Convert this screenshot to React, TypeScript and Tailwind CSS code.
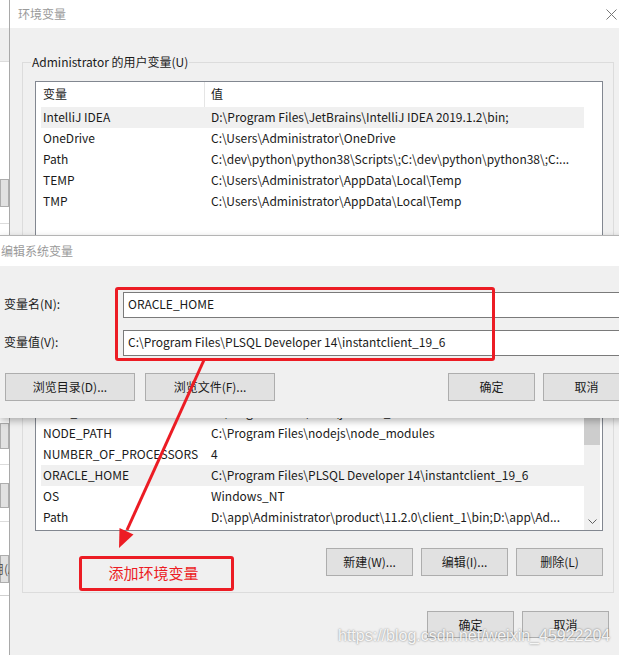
import clsx from "clsx";

type Item = { name: string; value: string; selected?: boolean };

const userVars: Item[] = [
  { name: "IntelliJ IDEA", value: "D:\\Program Files\\JetBrains\\IntelliJ IDEA 2019.1.2\\bin;", selected: true },
  { name: "OneDrive", value: "C:\\Users\\Administrator\\OneDrive" },
  { name: "Path", value: "C:\\dev\\python\\python38\\Scripts\\;C:\\dev\\python\\python38\\;C:..." },
  { name: "TEMP", value: "C:\\Users\\Administrator\\AppData\\Local\\Temp" },
  { name: "TMP", value: "C:\\Users\\Administrator\\AppData\\Local\\Temp" },
];

const systemVars: Item[] = [
  { name: "ComSpec", value: "C:\\Windows\\system32\\cmd.exe" },
  { name: "DriverData", value: "C:\\Windows\\System32\\Drivers\\DriverData" },
  { name: "JAVA_HOME", value: "C:\\Program Files\\Java\\jdk1.8.0_201" },
  { name: "NODE_PATH", value: "C:\\Program Files\\nodejs\\node_modules" },
  { name: "NUMBER_OF_PROCESSORS", value: "4" },
  { name: "ORACLE_HOME", value: "C:\\Program Files\\PLSQL Developer 14\\instantclient_19_6", selected: true },
  { name: "OS", value: "Windows_NT" },
  { name: "Path", value: "D:\\app\\Administrator\\product\\11.2.0\\client_1\\bin;D:\\app\\Ad..." },
];

function Row({ item }: { item: Item }) {
  return (
    <div className={clsx("flex h-[21px] shrink-0 items-center pb-[2px]", item.selected && "bg-[#f0f0f0]")}>
      <div className="w-[164px] pl-[2px] whitespace-nowrap overflow-hidden">{item.name}</div>
      <div className="flex-1 pl-[6px] whitespace-nowrap overflow-hidden">{item.value}</div>
    </div>
  );
}

function Btn({ label, className }: { label: string; className?: string }) {
  return (
    <div className={clsx("h-full shrink-0 bg-[#e1e1e1] border border-[#adadad] flex items-center justify-center", className)}>
      {label}
    </div>
  );
}

function LeftStrip() {
  return (
    <div className="w-[9px] shrink-0 h-full bg-white flex flex-col overflow-hidden">
      <div className="h-[28px] shrink-0 bg-white" />
      <div className="h-[34px] shrink-0 bg-[#efefef] border-b border-[#dcdcdc]" />
      <div className="h-[117px] shrink-0" />
      <div className="h-[28px] shrink-0 bg-[#e1e1e1] border border-[#adadad]" />
      <div className="h-[16px] shrink-0" />
      <div className="h-px shrink-0 bg-[#dcdcdc]" />
      <div className="h-[199px] shrink-0" />
      <div className="h-[26px] shrink-0 bg-[#e1e1e1] border border-[#adadad]" />
      <div className="h-[15px] shrink-0" />
      <div className="h-px shrink-0 bg-[#dcdcdc]" />
      <div className="h-[18px] shrink-0" />
      <div className="h-[25px] shrink-0 bg-[#e1e1e1] border border-[#adadad]" />
      <div className="h-[13px] shrink-0" />
      <div className="h-px shrink-0 bg-[#dcdcdc]" />
      <div className="h-[33px] shrink-0" />
      <div className="h-[28px] shrink-0 bg-[#e1e1e1] border border-[#adadad] flex items-center text-[#555] whitespace-nowrap">
        <span className="-ml-[21px]">应用(A)</span>
      </div>
      <div className="h-[12px] shrink-0" />
      <div className="h-px shrink-0 bg-[#d0d0d0]" />
    </div>
  );
}

function MainDialog() {
  return (
    <div className="w-[625px] shrink-0 h-full border-l border-[#a9a9a9] flex flex-col">
      <div className="h-[28px] shrink-0 bg-white flex items-center pl-[8px] text-[#9a9a9a]">
        <span>环境变量</span>
        <div className="ml-auto w-[46px] h-full flex items-center justify-center">
          <svg width="11" height="11" viewBox="0 0 11 11">
            <path d="M0.5 0.5L10.5 10.5M10.5 0.5L0.5 10.5" stroke="#777" strokeWidth="1" />
          </svg>
        </div>
      </div>

      <div className="flex-1 bg-[#f0f0f0] pt-[34px] pl-[12px]">
        {/* user variables */}
        <div className="w-[592px] border border-[#dcdcdc] pl-[12px] pr-[10px] pb-[6px]">
          <div className="-mt-[9px] -ml-[4px] px-[1px] w-fit leading-[16px] bg-[#f0f0f0]">Administrator 的用户变量(U)</div>
          <div className="mt-[11px] h-[172px] w-[568px] border border-[#828790] bg-white">
            <div className="ml-[5px] w-[543px]">
              <div className="flex h-[25px] items-center">
                <div className="w-[164px] h-full pl-[2px] pb-[2px] flex items-center border-r border-[#e5e5e5]">变量</div>
                <div className="flex-1 pl-[6px] pb-[2px]">值</div>
              </div>
              {userVars.map((v) => (
                <Row key={v.name} item={v} />
              ))}
            </div>
          </div>
          <div className="mt-[14px] h-[27px] flex justify-end gap-[8px]">
            <Btn label="新建(N)..." className="w-[87px]" />
            <Btn label="编辑(E)..." className="w-[87px]" />
            <Btn label="删除(D)" className="w-[87px]" />
          </div>
        </div>

        {/* system variables */}
        <div className="mt-[15px] w-[592px] border border-[#dcdcdc] pl-[12px] pr-[10px] pb-[16px]">
          <div className="-mt-[9px] -ml-[4px] px-[1px] w-fit leading-[16px] bg-[#f0f0f0]">系统变量(S)</div>
          <div className="mt-[10px] h-[197px] w-[568px] border border-[#828790] bg-white flex overflow-hidden">
            <div className="ml-[5px] w-[543px] flex flex-col justify-end pb-[2px] overflow-hidden">
              {systemVars.map((v) => (
                <Row key={v.name} item={v} />
              ))}
            </div>
            <div className="w-[16px] bg-[#f0f0f0] flex flex-col justify-end">
              <div className="h-[28px] bg-[#cdcdcd]" />
              <div className="h-[68px]" />
              <div className="h-[17px] flex items-center justify-center">
                <svg width="9" height="5" viewBox="0 0 9 5">
                  <path d="M0.5 0.5L4.5 4.5L8.5 0.5" stroke="#606060" strokeWidth="1" fill="none" />
                </svg>
              </div>
            </div>
          </div>
          <div className="mt-[17px] h-[28px] flex justify-end gap-[8px]">
            <Btn label="新建(W)..." className="w-[87px]" />
            <Btn label="编辑(I)..." className="w-[87px]" />
            <Btn label="删除(L)" className="w-[87px]" />
          </div>
        </div>

        <div className="mt-[18px] h-[27px] w-[587px] flex justify-end gap-[8px]">
          <Btn label="确定" className="w-[87px]" />
          <Btn label="取消" className="w-[87px]" />
        </div>
      </div>
    </div>
  );
}

function EditDialog() {
  return (
    <div className="absolute left-0 top-[235px] w-[640px] h-[183px] border-t border-[#b4b4b4] flex flex-col shadow-[0_3px_7px_rgba(0,0,0,0.28)]">
      <div className="h-[30px] shrink-0 bg-white flex items-center pl-[1px] text-[#9a9a9a]">编辑系统变量</div>
      <div className="flex-1 bg-[#f0f0f0] pt-[26px]">
        <div className="flex items-center h-[26px]">
          <div className="w-[123px] pl-[4px] -mt-[2px]">变量名(N):</div>
          <div className="flex-1 h-full border border-[#7a7a7a] bg-white pl-[4px] pb-[2px] flex items-center">ORACLE_HOME</div>
        </div>
        <div className="mt-[12px] flex items-center h-[26px]">
          <div className="w-[123px] pl-[4px] -mt-[2px]">变量值(V):</div>
          <div className="flex-1 h-full border border-[#7a7a7a] bg-white pl-[4px] pb-[2px] flex items-center whitespace-nowrap">
            C:\Program Files\PLSQL Developer 14\instantclient_19_6
          </div>
        </div>
        <div className="mt-[17px] h-[28px] flex pl-[5px] pr-[10px]">
          <Btn label="浏览目录(D)..." className="w-[130px]" />
          <Btn label="浏览文件(F)..." className="ml-[10px] w-[130px]" />
          <Btn label="确定" className="ml-auto w-[87px]" />
          <Btn label="取消" className="ml-[8px] w-[87px]" />
        </div>
      </div>
    </div>
  );
}

export default function App() {
  return (
    <div className="relative w-[619px] h-[655px] overflow-hidden bg-white flex font-['Noto_Sans_CJK_SC',sans-serif] text-[12px] text-[#1a1a1a]">
      <LeftStrip />
      <MainDialog />
      <EditDialog />

      {/* annotations */}
      <div className="absolute left-[115px] top-[287px] w-[380px] h-[74px] border-[3px] border-[#ec1c24] rounded-[3px]" />
      <svg className="absolute left-0 top-0 pointer-events-none" width="619" height="655" viewBox="0 0 619 655">
        <line x1="204" y1="360" x2="127" y2="530" stroke="#ec1c24" strokeWidth="3" />
        <polygon points="119,548 119.5,528 133.5,534.5" fill="#ec1c24" />
      </svg>
      <div className="absolute left-[79px] top-[556px] w-[155px] h-[35px] border-[3px] border-[#ec1c24] rounded-[3px] flex items-center justify-center pr-[6px] text-[15px] text-[#ec1c24]">
        添加环境变量
      </div>
      <div className="absolute left-[338px] top-[624px] text-[16px] font-['Liberation_Sans',sans-serif] text-white/90 [text-shadow:0_0_2px_rgba(0,0,0,0.55)] whitespace-nowrap">
        https://blog.csdn.net/weixin_45922204
      </div>
    </div>
  );
}
